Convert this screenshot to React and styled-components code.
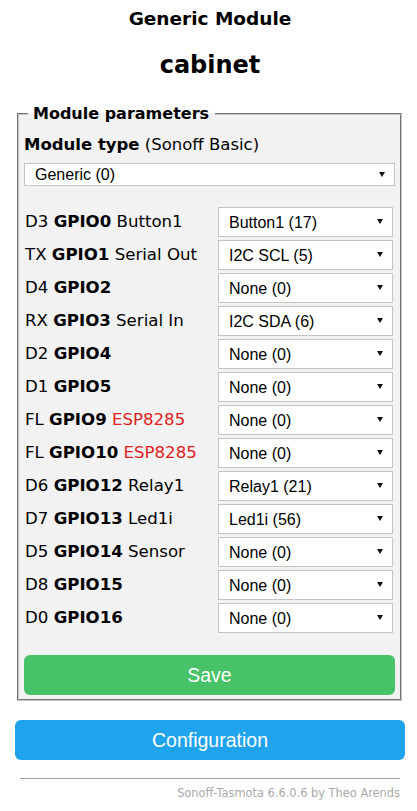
import React from "react";
import styled, { createGlobalStyle } from "styled-components";

const GlobalStyle = createGlobalStyle`
  html, body {
    margin: 0;
    padding: 0;
    background: #fff;
  }
  body {
    font-family: "DejaVu Sans", Verdana, sans-serif;
    color: #000;
  }
`;

const Page = styled.div`
  width: 417px;
  box-sizing: border-box;
  padding: 0 12px 0 15px;
`;

const ModuleTitle = styled.h3`
  margin: 7px 0 0 0;
  font-size: 18.5px;
  line-height: 24px;
  font-weight: bold;
  text-align: center;
`;

const DeviceName = styled.h2`
  margin: 19px 0 0 0;
  font-size: 24px;
  line-height: 30px;
  font-weight: bold;
  text-align: center;
`;

const Fieldset = styled.fieldset`
  margin: 24px 3px 0 2px;
  padding: 0 5px 4px 5px;
  border: 2px groove #c8c8c8;
  background: #f2f2f2;
  min-width: 0;
`;

const Legend = styled.legend`
  padding: 0 6px 0 5px;
  margin-left: 4px;
  font-size: 16px;
  line-height: 19px;
  font-weight: bold;
`;

const TypeLabel = styled.div`
  margin-top: 12px;
  font-size: 16.5px;
  line-height: 20px;
  b {
    font-weight: bold;
  }
`;

const SelectWrap = styled.div`
  position: relative;
  width: ${(p) => p.$width || "100%"};
  margin-top: ${(p) => p.$top || 0}px;
`;

const Select = styled.select`
  appearance: none;
  -webkit-appearance: none;
  display: block;
  width: 100%;
  height: ${(p) => p.$height}px;
  box-sizing: border-box;
  margin: 0;
  padding: 0 20px 0 10px;
  border: 1px solid #c4c4c4;
  border-radius: 0;
  background: #fff;
  color: #000;
  font-family: "Liberation Sans", Arial, sans-serif;
  font-size: 16px;
  outline: none;
`;

const Arrow = styled.svg`
  position: absolute;
  right: 10px;
  top: 50%;
  margin-top: -3px;
  pointer-events: none;
`;

const PinGrid = styled.div`
  margin-top: 21px;
  display: grid;
  grid-template-columns: 194px 175px;
  grid-auto-rows: 30px;
  row-gap: 3px;
  align-items: center;
`;

const PinLabel = styled.div`
  padding-left: 1px;
  font-size: 16.6px;
  line-height: 20px;
  white-space: nowrap;
  b {
    font-weight: bold;
  }
`;

const Warn = styled.span`
  color: #e21d1d;
`;

const Button = styled.button`
  display: block;
  width: 100%;
  height: 40px;
  margin-top: ${(p) => p.$top}px;
  border: none;
  border-radius: 6px;
  background: ${(p) => p.$color};
  color: #fff;
  font-family: "Liberation Sans", Arial, sans-serif;
  font-size: 19.5px;
  cursor: pointer;
`;

const Rule = styled.hr`
  margin: 18px 5px 0 5px;
  border: none;
  border-top: 1px solid #a0a0a0;
  height: 0;
`;

const Footer = styled.div`
  margin: 6px 5px 0 0;
  text-align: right;
  font-size: 11.4px;
  line-height: 16px;
  color: #aaa;
`;

const pins = [
  ["D3", "GPIO0", "Button1", "Button1 (17)"],
  ["TX", "GPIO1", "Serial Out", "I2C SCL (5)"],
  ["D4", "GPIO2", "", "None (0)"],
  ["RX", "GPIO3", "Serial In", "I2C SDA (6)"],
  ["D2", "GPIO4", "", "None (0)"],
  ["D1", "GPIO5", "", "None (0)"],
  ["FL", "GPIO9", "ESP8285", "None (0)", true],
  ["FL", "GPIO10", "ESP8285", "None (0)", true],
  ["D6", "GPIO12", "Relay1", "Relay1 (21)"],
  ["D7", "GPIO13", "Led1i", "Led1i (56)"],
  ["D5", "GPIO14", "Sensor", "None (0)"],
  ["D8", "GPIO15", "", "None (0)"],
  ["D0", "GPIO16", "", "None (0)"],
];

function Dropdown({ value, height, width, top }) {
  return (
    <SelectWrap $width={width} $top={top}>
      <Select $height={height} defaultValue={value}>
        <option>{value}</option>
      </Select>
      <Arrow width="6" height="5" viewBox="0 0 6 5">
        <path d="M0 0 H6 L3 5 Z" fill="#111" />
      </Arrow>
    </SelectWrap>
  );
}

export default function App() {
  return (
    <Page>
      <GlobalStyle />
      <ModuleTitle>Generic Module</ModuleTitle>
      <DeviceName>cabinet</DeviceName>
      <Fieldset>
        <Legend>Module parameters</Legend>
        <TypeLabel>
          <b>Module type</b> (Sonoff Basic)
        </TypeLabel>
        <Dropdown value="Generic (0)" height={23} top={8} />
        <PinGrid>
          {pins.map(([pad, gpio, func, value, warn]) => (
            <React.Fragment key={gpio}>
              <PinLabel>
                {pad} <b>{gpio}</b>{" "}
                {warn ? <Warn>{func}</Warn> : func}
              </PinLabel>
              <Dropdown value={value} height={30} />
            </React.Fragment>
          ))}
        </PinGrid>
        <Button $color="#47c266" $top={22}>Save</Button>
      </Fieldset>
      <Button $color="#1fa3ec" $top={19}>Configuration</Button>
      <Rule />
      <Footer>Sonoff-Tasmota 6.6.0.6 by Theo Arends</Footer>
    </Page>
  );
}
